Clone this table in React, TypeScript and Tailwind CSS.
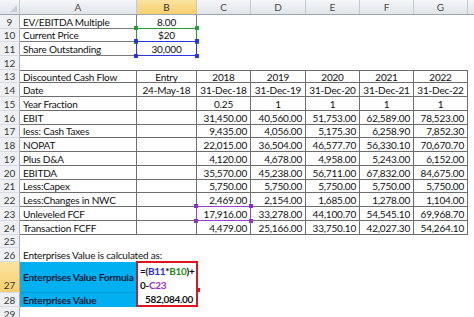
import React from "react";

const W = ["w-[117px]", "w-[60px]", "w-[54px]", "w-[55px]", "w-[54px]", "w-[54px]", "w-[54px]"];
const LETTERS = ["A", "B", "C", "D", "E", "F", "G"];

type Align = "l" | "c" | "r";

const table: { cells: string[]; align: Align }[] = [
  { cells: ["Discounted Cash Flow", "Entry", "2018", "2019", "2020", "2021", "2022"], align: "c" },
  { cells: ["Date", "24-May-18", "31-Dec-18", "31-Dec-19", "31-Dec-20", "31-Dec-21", "31-Dec-22"], align: "c" },
  { cells: ["Year Fraction", "", "0.25", "1", "1", "1", "1"], align: "c" },
  { cells: ["EBIT", "", "31,450.00", "40,560.00", "51,753.00", "62,589.00", "78,523.00"], align: "r" },
  { cells: ["less: Cash Taxes", "", "9,435.00", "4,056.00", "5,175.30", "6,258.90", "7,852.30"], align: "r" },
  { cells: ["NOPAT", "", "22,015.00", "36,504.00", "46,577.70", "56,330.10", "70,670.70"], align: "r" },
  { cells: ["Plus D&A", "", "4,120.00", "4,678.00", "4,958.00", "5,243.00", "6,152.00"], align: "r" },
  { cells: ["EBITDA", "", "35,570.00", "45,238.00", "56,711.00", "67,832.00", "84,675.00"], align: "r" },
  { cells: ["Less:Capex", "", "5,750.00", "5,750.00", "5,750.00", "5,750.00", "5,750.00"], align: "r" },
  { cells: ["Less:Changes in NWC", "", "2,469.00", "2,154.00", "1,685.00", "1,278.00", "1,104.00"], align: "r" },
  { cells: ["Unleveled FCF", "", "17,916.00", "33,278.00", "44,100.70", "54,545.10", "69,968.70"], align: "r" },
  { cells: ["Transaction FCFF", "", "4,479.00", "25,166.00", "33,750.10", "42,027.30", "54,264.10"], align: "r" },
];

// row heights 9..26 (screenshot is scaled, so rows alternate 14/13px)
const H: Record<number, string> = {
  9: "h-[14px]", 10: "h-[13px]", 11: "h-[14px]", 12: "h-[14px]", 13: "h-[13px]", 14: "h-[14px]",
  15: "h-[14px]", 16: "h-[14px]", 17: "h-[13px]", 18: "h-[14px]", 19: "h-[14px]", 20: "h-[14px]",
  21: "h-[13px]", 22: "h-[14px]", 23: "h-[14px]", 24: "h-[14px]", 25: "h-[13px]", 26: "h-[14px]",
};

const justify = { l: "justify-start", c: "justify-center", r: "justify-end" };

function RowNum({ n, className = "" }: { n: number; className?: string }) {
  return (
    <div
      className={`w-[20px] shrink-0 flex items-center justify-center border-r border-b border-r-[#a7aeb8] border-b-[#d8dce2] text-[#3a3a3a] tracking-normal ${className}`}
    >
      {n}
    </div>
  );
}

function Row({ n, children }: { n: number; children?: React.ReactNode }) {
  return (
    <div className={`flex ${H[n]}`}>
      <RowNum n={n} className="bg-[#eef0f4]" />
      {children}
    </div>
  );
}

function Handle({ className }: { className: string }) {
  return <span className={`absolute w-[4px] h-[4px] ${className}`} />;
}

function Box({ color, bg }: { color: string; bg: string }) {
  return (
    <span className={`absolute -left-px -top-px -right-px -bottom-px border ${color} pointer-events-none`}>
      <Handle className={`${bg} -left-[3px] -top-[3px]`} />
      <Handle className={`${bg} -right-[3px] -top-[3px]`} />
      <Handle className={`${bg} -left-[3px] -bottom-[3px]`} />
      <Handle className={`${bg} -right-[3px] -bottom-[3px]`} />
    </span>
  );
}

export default function App() {
  return (
    <div className="w-[474px] h-[317px] overflow-hidden bg-white font-['Lato',sans-serif] text-[10px] tracking-[-0.2px] leading-none text-[#111]">
      {/* column headers */}
      <div className="flex h-[15px] border-b border-[#9ea6b0] bg-gradient-to-b from-[#f4f6f8] to-[#e1e5ea] text-[#4a4a4a] tracking-normal">
        <div className="w-[20px] shrink-0 border-r border-[#c3c9d1] relative">
          <span className="absolute right-[2px] bottom-[2px] w-0 h-0 border-l-[7px] border-l-transparent border-b-[7px] border-b-[#c9ced6]" />
        </div>
        {LETTERS.map((l, i) => (
          <div
            key={l}
            className={`${W[i]} shrink-0 flex items-center justify-center border-r border-[#c3c9d1] ${
              l === "B" ? "bg-gradient-to-b from-[#fbe3a0] to-[#f7cf6c] text-[#333]" : ""
            }`}
          >
            {l}
          </div>
        ))}
        <div className="flex-1" />
      </div>

      {/* inputs */}
      {[
        [9, "EV/EBITDA Multiple", "8.00"],
        [10, "Current Price", "$20"],
        [11, "Share Outstanding", "30,000"],
      ].map(([n, label, val]) => (
        <Row key={n as number} n={n as number}>
          <div className={`${W[0]} shrink-0 px-[3px] flex items-center whitespace-nowrap border-r border-b border-[#7a7a7a]`}>
            {label}
          </div>
          <div className={`${W[1]} shrink-0 relative flex items-center justify-center border-r border-b border-[#7a7a7a]`}>
            {val}
            {n === 10 && <Box color="border-[#2e9a3a]" bg="bg-[#2e9a3a]" />}
            {n === 11 && <Box color="border-[#2a36e0]" bg="bg-[#2a36e0]" />}
          </div>
        </Row>
      ))}
      <Row n={12} />

      {/* cash flow table */}
      {table.map((r, ri) => {
        const n = 13 + ri;
        return (
          <Row key={n} n={n}>
            {r.cells.map((c, ci) => (
              <div
                key={ci}
                className={`${W[ci]} shrink-0 relative px-[3px] flex items-center whitespace-nowrap border-r border-b border-[#6e6e6e] ${
                  ri === 0 ? "border-t" : ""
                } ${ci === 0 ? "justify-start" : justify[r.align]}`}
              >
                {c}
                {n === 23 && ci === 2 && <Box color="border-[#9b3fd6]" bg="bg-[#8e2bd0]" />}
              </div>
            ))}
          </Row>
        );
      })}

      <Row n={25} />
      <Row n={26}>
        <div className="px-[3px] flex items-center whitespace-nowrap">Enterprises Value is calculated as:</div>
      </Row>

      {/* result block */}
      <div className="flex">
        <div className="flex flex-col">
          <div className="h-[31px] w-[20px] flex items-end justify-center pb-[2px] border-r border-b border-r-[#a7aeb8] border-b-[#d8dce2] bg-gradient-to-b from-[#fbe3a0] to-[#f7cf6c] text-[#3a3a3a] tracking-normal">
            27
          </div>
          <RowNum n={28} className="h-[14px] bg-[#eef0f4]" />
          <RowNum n={29} className="h-[14px] bg-[#eef0f4]" />
        </div>
        <div className="flex flex-col">
          <div className={`${W[0]} h-[31px] bg-[#00b0f0] px-[3px] flex items-center font-bold text-[#0b1a3c] whitespace-nowrap border-b border-[#0a9ad4]`}>
            Enterprises Value Formula
          </div>
          <div className={`${W[0]} h-[14px] bg-[#00b0f0] px-[3px] flex items-center font-bold text-[#0b1a3c] whitespace-nowrap`}>
            Enterprises Value
          </div>
        </div>
        <div className="relative w-[62px] -ml-px h-[46px] -mt-px border-2 border-[#e0141c] flex flex-col font-bold tracking-[-0.3px] whitespace-nowrap">
          <div className="h-[29px] px-[2px] pt-[3px] flex flex-col gap-[4px]">
            <span>
              =(<span className="text-[#2a2ae6]">B11</span>*<span className="text-[#1e8a1e]">B10</span>)+
            </span>
            <span>
              0-<span className="text-[#9a2fd0]">C23</span>
            </span>
          </div>
          <div className="h-[13px] px-[3px] flex items-center justify-end">582,084.00</div>
          <span className="absolute -right-[4px] top-[25px] w-[4px] h-[4px] bg-[#e0141c]" />
        </div>
      </div>
    </div>
  );
}
